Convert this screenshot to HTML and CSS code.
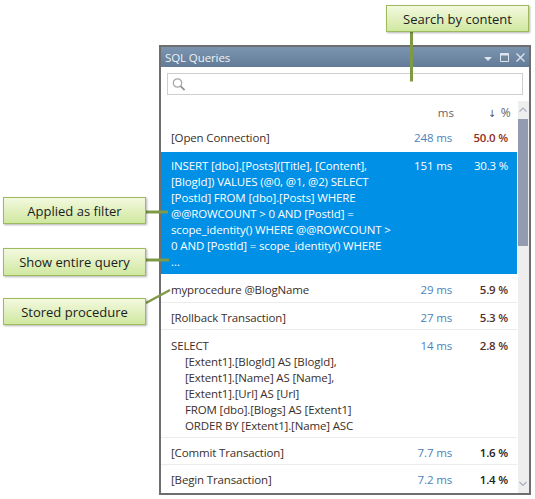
FILE: index.html
```html
<!DOCTYPE html>
<html lang="en">
<head>
<meta charset="utf-8">
<title>SQL Queries</title>
<link rel="stylesheet" href="styles.css">
</head>
<body>
<div class="stage">
  <section class="window">
    <header class="titlebar">
      <span class="title">SQL Queries</span>
      <span class="controls">
        <svg class="ctl" width="11" height="11" viewBox="0 0 11 11"><path d="M1 5h8L5 9z" fill="#dfe5ec"/></svg>
        <svg class="ctl" width="11" height="11" viewBox="0 0 11 11"><path d="M1.5 1.5h8v8h-8z" fill="none" stroke="#dfe5ec" stroke-width="1"/><path d="M1 2.5h9" stroke="#dfe5ec" stroke-width="2"/></svg>
        <svg class="ctl" width="11" height="11" viewBox="0 0 11 11"><path d="M1.5 1.5l8 8M9.5 1.5l-8 8" stroke="#dfe5ec" stroke-width="1.3"/></svg>
      </span>
    </header>
    <div class="search">
      <svg width="14" height="15" viewBox="0 0 14 15"><circle cx="5.5" cy="6" r="4.2" fill="none" stroke="#a6a6a6" stroke-width="1.2"/><path d="M8.6 9.2l4 4" stroke="#8f8f8f" stroke-width="1.7"/></svg>
    </div>
    <div class="body">
      <div class="list">
        <div class="head"><span class="ms">ms</span><span class="pct"><span class="arrow">↓</span>&nbsp; %</span></div>
        <div class="row open"><div class="q">[Open Connection]</div><div class="ms">248 ms</div><div class="pct hot">50.0 %</div></div>
        <div class="row selected"><div class="q">INSERT [dbo].[Posts]([Title], [Content],<br>[BlogId]) VALUES (@0, @1, @2) SELECT<br>[PostId] FROM [dbo].[Posts] WHERE<br>@@ROWCOUNT &gt; 0 AND [PostId] =<br>scope_identity() WHERE @@ROWCOUNT &gt;<br>0 AND [PostId] = scope_identity() WHERE<br>…</div><div class="ms">151 ms</div><div class="pct">30.3 %</div></div>
        <div class="row roomy"><div class="q">myprocedure @BlogName</div><div class="ms">29 ms</div><div class="pct warm">5.9 %</div></div>
        <div class="row"><div class="q">[Rollback Transaction]</div><div class="ms">27 ms</div><div class="pct warm">5.3 %</div></div>
        <div class="row multi"><div class="q">SELECT<div class="indent">[Extent1].[BlogId] AS [BlogId],<br>[Extent1].[Name] AS [Name],<br>[Extent1].[Url] AS [Url]<br>FROM [dbo].[Blogs] AS [Extent1]<br>ORDER BY [Extent1].[Name] ASC</div></div><div class="ms">14 ms</div><div class="pct warm">2.8 %</div></div>
        <div class="row"><div class="q">[Commit Transaction]</div><div class="ms">7.7 ms</div><div class="pct">1.6 %</div></div>
        <div class="row last"><div class="q">[Begin Transaction]</div><div class="ms">7.2 ms</div><div class="pct">1.4 %</div></div>
      </div>
      <div class="scrollbar">
        <svg class="sb-btn" width="10" height="18" viewBox="0 0 10 18"><path d="M1.5 10.5L5 7l3.5 3.5" fill="none" stroke="#a9b0bd" stroke-width="1.2"/></svg>
        <div class="thumb"></div>
        <svg class="sb-btn sb-end" width="10" height="18" viewBox="0 0 10 18"><path d="M1.5 7L5 10.5 8.500 7" fill="none" stroke="#a9b0bd" stroke-width="1.2"/></svg>
      </div>
    </div>
  </section>

  <svg class="lines" width="535" height="499" viewBox="0 0 535 499">
    <g stroke="#7f9a45" stroke-width="3" fill="none">
      <path d="M411.500 30V81.500"/>
      <path d="M146 212H168"/>
      <path d="M146 260H169"/>
    </g>
    <path d="M146 303L170 290" stroke="#7f9a45" stroke-width="2.500" fill="none"/>
  </svg>

  <div class="callout c-search">Search by content</div>
  <div class="callout c-filter">Applied as filter</div>
  <div class="callout c-entire">Show entire query</div>
  <div class="callout c-proc">Stored procedure</div>
</div>
</body>
</html>
```

FILE: styles.css
```css
* { box-sizing: border-box; }
html, body { margin: 0; padding: 0; background: #fff; }
body { font-family: "Open Sans", "Noto Sans", sans-serif; font-size: 11.5px; color: #333; }
.stage { position: relative; width: 535px; height: 499px; overflow: hidden; }

.window {
  position: absolute; left: 159px; top: 45px; width: 372px; height: 450px;
  border: 2px solid #6e6e6e; background: #fff;
  display: flex; flex-direction: column;
}
.titlebar {
  height: 20px; flex: none; display: flex; align-items: center; justify-content: space-between;
  padding: 0 3px 0 4px; background: linear-gradient(#7b95b0, #637b98); color: #eef2f6;
  font-size: 11.5px; letter-spacing: -0.1px;
}
.controls { display: flex; gap: 5px; align-items: center; }
.ctl { display: block; }
.search {
  flex: none; margin: 6px 6px 0 6px; height: 22px; border: 1px solid #cfcfcf;
  padding: 3px 0 0 4px;
}
.search svg { display: block; }
.body { flex: 1; min-height: 0; display: flex; margin-top: 6px; overflow: hidden; }
.list { flex: 1; min-width: 0; }
.head { height: 21px; padding-top: 2px; display: flex; justify-content: flex-end; align-items: center; color: #666; }
.head .ms { width: 62px; text-align: right; color: #666; }
.head .pct { width: 63px; text-align: right; color: #666; font-weight: 400; padding-right: 7px; font-size: 12px; letter-spacing: -0.6px; }
.arrow { font-family: "DejaVu Sans", sans-serif; font-size: 10px; color: #555; }
.row {
  display: flex; padding: 7px 0 3px 10px; line-height: 16px; border-bottom: 1px solid #ececec;
  letter-spacing: -0.15px; color: #3b2f2a;
}
.row.open { padding: 8px 0 6px 10px; border-bottom: none; }
.row.selected { padding: 6px 0 4px 10px; background: #0090e6; color: #fff; border-bottom: none; }
.row.roomy { padding: 8px 0 4px 10px; }
.row.multi { padding-top: 8px; }
.row.last { border-bottom: none; }
.q { flex: 1; min-width: 0; white-space: nowrap; }
.indent { padding-left: 14px; }
.ms { width: 62px; flex: none; text-align: right; color: #4d82bd; }
.pct { width: 65px; flex: none; text-align: right; font-weight: 600; padding-right: 9px; color: #222; letter-spacing: -0.2px; }
.pct.hot { color: #8f2f23; }
.pct.warm { color: #55302a; }
.row.selected .ms, .row.selected .pct { color: #fff; }
.row.selected .pct { font-weight: 500; }
.scrollbar {
  width: 11px; flex: none; margin-left: 1px; padding-right: 1px; background: #eeeeee;
  display: flex; flex-direction: column;
}
.sb-btn { display: block; flex: none; }
.thumb { height: 127px; background: #929bb0; flex: none; }
.sb-end { margin-top: auto; }

.lines { position: absolute; left: 0; top: 0; pointer-events: none; }
.callout {
  position: absolute; height: 27px; width: 143px; display: flex; align-items: center; justify-content: center;
  background: linear-gradient(#f3f9df, #d0e8a0); border: 1px solid #9dba5c;
  box-shadow: 1px 1px 2px rgba(0,0,0,.3); color: #1c1c1c; font-size: 13px;
}
.c-search { left: 386px; top: 5px; }
.c-filter { left: 3px; top: 197px; }
.c-entire { left: 3px; top: 248px; height: 28px; }
.c-proc { left: 3px; top: 298px; }
```
